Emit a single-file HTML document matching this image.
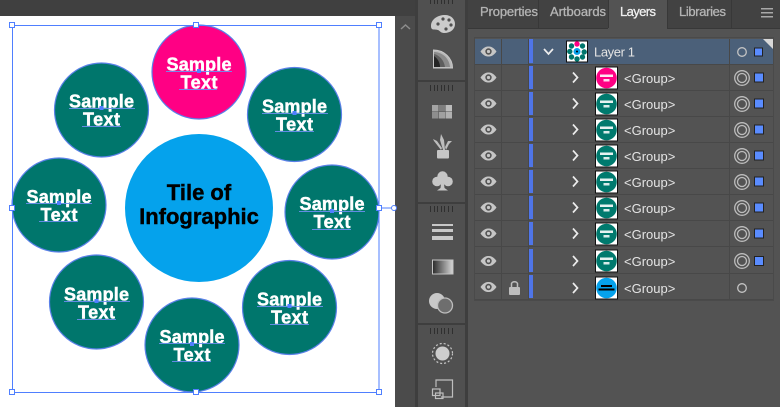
<!DOCTYPE html>
<html><head><meta charset="utf-8"><style>
html,body{margin:0;padding:0;background:#535353;width:780px;height:407px;overflow:hidden}
svg{display:block;position:absolute;left:0;top:0}
text{font-family:"Liberation Sans",sans-serif}
.s{font-size:18px;font-weight:bold;fill:#fff;stroke:#fff;stroke-width:.45px;text-anchor:middle}
.t{font-size:22px;font-weight:bold;fill:#000;stroke:#000;stroke-width:.4px;text-anchor:middle}
.g{font-size:13px;fill:#e4e4e4}
.tab{font-size:13px;fill:#b4b4b4;stroke:#b4b4b4;stroke-width:.3px}
</style></head><body>
<svg width="780" height="407" viewBox="0 0 780 407" xmlns="http://www.w3.org/2000/svg">
<defs>
<g id="eye"><path d="M-8 0C-5-4.500-2-5 0-5S5-4.500 8 0C5 4.500 2 5 0 5S-5 4.500-8 0Z" fill="#c6c6c6"/><circle r="3.200" fill="#535353"/><circle r="1.600" fill="#c6c6c6"/></g>
<path id="chev" d="M-2-5L2.500 0L-2 5" fill="none" stroke="#ececec" stroke-width="1.700"/>
<g id="tgl"><rect x="0" y="0" width="22" height="22" fill="#fff" stroke="#111" stroke-width="1"/></g>
<g id="teal"><use href="#tgl"/><circle cx="11" cy="11" r="10.300" fill="#007a6e"/><rect x="4.500" y="7.500" width="13" height="2.500" fill="#fff" opacity=".9"/><rect x="8" y="12" width="6" height="2.500" fill="#fff" opacity=".85"/></g>
<g id="pink"><use href="#tgl"/><circle cx="11" cy="11" r="10.300" fill="#ff0084"/><rect x="4.500" y="7.500" width="13" height="2.500" fill="#fff" opacity=".9"/><rect x="8" y="12" width="6" height="2.500" fill="#fff" opacity=".85"/></g>
<g id="tg"><circle r="7.300" fill="none" stroke="#bdbdbd" stroke-width="1.300"/><circle r="4.500" fill="none" stroke="#bdbdbd" stroke-width="1.300"/></g>
<g id="sq"><rect x="-5" y="-5" width="10" height="10" fill="#222"/><rect x="-4" y="-4" width="8" height="8" fill="#5a8cff"/></g>
<g id="grip" fill="#2f2f2f"><rect x="0" width="1" height="6"/><rect x="4" width="1" height="6"/><rect x="7" width="1" height="6"/><rect x="11" width="1" height="6"/><rect x="14" width="1" height="6"/><rect x="18" width="1" height="6"/><rect x="22" width="1" height="6"/></g>
<linearGradient id="gr" x1="0" x2="1" y1="0" y2="0"><stop offset="0" stop-color="#2a2a2a"/><stop offset="1" stop-color="#d8d8d8"/></linearGradient>
</defs>

<!-- backgrounds -->
<rect x="0" y="0" width="780" height="407" fill="#535353"/>
<rect x="0" y="0" width="415" height="16" fill="#404040"/>
<rect x="0" y="16" width="395" height="391" fill="#fff"/>
<rect x="395" y="16" width="20" height="391" fill="#4b4b4b"/>
<rect x="415" y="0" width="3" height="407" fill="#3e3e3e"/>
<rect x="418" y="0" width="47" height="407" fill="#505050"/>
<rect x="465" y="0" width="3" height="407" fill="#3e3e3e"/>
<path d="M401 29L405.500 25L410 29" fill="none" stroke="#8c8c8c" stroke-width="1.500"/>

<!-- circles -->
<g stroke="#5a80e8" stroke-width="1.200">
<circle cx="199" cy="72" r="47" fill="#ff0084"/>
<g fill="#00766c">
<circle cx="101.500" cy="110" r="47"/>
<circle cx="294.500" cy="114.500" r="47"/>
<circle cx="332" cy="212" r="47"/>
<circle cx="289.500" cy="307.500" r="47"/>
<circle cx="192" cy="345" r="47"/>
<circle cx="96.500" cy="302" r="47"/>
<circle cx="59" cy="205" r="47"/>
</g></g>
<circle cx="199" cy="208" r="74" fill="#05a2ec"/>

<!-- text -->
<text class="s" x="199" y="70.500" textLength="65">Sample</text><text class="s" x="199" y="88.500" textLength="37">Text</text>
<text class="s" x="101.500" y="107.500" textLength="65">Sample</text><text class="s" x="101.500" y="125.500" textLength="37">Text</text>
<text class="s" x="294.500" y="112.500" textLength="65">Sample</text><text class="s" x="294.500" y="130.500" textLength="37">Text</text>
<text class="s" x="332" y="210" textLength="65">Sample</text><text class="s" x="332" y="228" textLength="37">Text</text>
<text class="s" x="289.500" y="305.500" textLength="65">Sample</text><text class="s" x="289.500" y="323.500" textLength="37">Text</text>
<text class="s" x="192" y="343" textLength="65">Sample</text><text class="s" x="192" y="361" textLength="37">Text</text>
<text class="s" x="96.500" y="300.500" textLength="65">Sample</text><text class="s" x="96.500" y="318.500" textLength="37">Text</text>
<text class="s" x="59" y="203" textLength="65">Sample</text><text class="s" x="59" y="221" textLength="37">Text</text>
<text class="t" x="199" y="200">Tile of</text>
<text class="t" x="199" y="224">Infographic</text>

<!-- text underlines -->
<g stroke="#6d8ff0" stroke-width="1" opacity=".9">
<path d="M166 71.500H232M179 89.500H217"/>
<path d="M69 108.500H135M82 126.500H121"/>
<path d="M262 113.500H328M275 131.500H314"/>
<path d="M299 211.500H365M312 229.500H351"/>
<path d="M257 306.500H323M270 324.500H309"/>
<path d="M159 343.500H225M172 361.500H211"/>
<path d="M64 301.500H130M77 319.500H116"/>
<path d="M26 203.500H92M39 221.500H78"/>
</g>
<g fill="#4f7fff">
<rect x="197" y="69" width="4" height="4"/><rect x="99.500" y="106" width="4" height="4"/><rect x="292.500" y="111" width="4" height="4"/><rect x="330" y="209" width="4" height="4"/><rect x="287.500" y="304" width="4" height="4"/><rect x="190" y="342" width="4" height="4"/><rect x="94.500" y="299" width="4" height="4"/><rect x="57" y="201" width="4" height="4"/>
</g>

<!-- selection -->
<rect x="12.500" y="25.500" width="366.500" height="367" fill="none" stroke="#4f7fff" stroke-width="1"/>
<path d="M379 208H391" stroke="#4f7fff" stroke-width="1"/>
<circle cx="394" cy="208" r="2.500" fill="#fff" stroke="#4f7fff"/>
<g fill="#fff" stroke="#4f7fff" stroke-width="1">
<rect x="9.500" y="22.500" width="5" height="5"/><rect x="193.500" y="22.500" width="5" height="5"/><rect x="376.500" y="22.500" width="5" height="5"/>
<rect x="9.500" y="205.500" width="5" height="5"/><rect x="376.500" y="205.500" width="5" height="5"/>
<rect x="9.500" y="389.500" width="5" height="5"/><rect x="193.500" y="389.500" width="5" height="5"/><rect x="376.500" y="389.500" width="5" height="5"/>
</g>

<!-- tool panel dividers -->
<g fill="#3e3e3e"><rect x="418" y="80" width="47" height="2"/><rect x="418" y="202" width="47" height="2"/><rect x="418" y="323" width="47" height="2"/></g>
<use href="#grip" x="430" y="-2"/><use href="#grip" x="430" y="85"/><use href="#grip" x="430" y="206"/><use href="#grip" x="430" y="328"/>

<!-- palette -->
<path d="M431 26C431 19 438 15 445 15C451 15 455 19 455 24C455 29 451 33 444 33C441 33 440 31 438 30C435 29 431 31 431 26Z" fill="#cbcbcb"/>
<g fill="#505050"><circle cx="438" cy="24" r="1.600"/><circle cx="443" cy="19" r="1.600"/><circle cx="449" cy="20" r="1.600"/><circle cx="451" cy="25" r="1.600"/><circle cx="446" cy="29" r="1.600"/></g>
<!-- fan gradient -->
<path d="M433.500 50C444 50 452.500 58 452.500 68H433.500Z" fill="#b8b8b8" stroke="#c8c8c8"/>
<path d="M434 52C441 52 449 57 450 67H434Z" fill="#8a8a8a"/>
<path d="M434 54C439 55 444 60 445 67H434Z" fill="#5e5e5e"/>
<path d="M434 56C437 58 440 62 440 67H434Z" fill="#252525"/>
<!-- swatches -->
<g>
<rect x="432" y="105" width="6.500" height="6.500" fill="#a4a4a4"/><rect x="439" y="105" width="6" height="6.500" fill="#7e7e7e"/><rect x="445.500" y="105" width="6.500" height="6.500" fill="#bcbcbc"/>
<rect x="432" y="112" width="6.500" height="6.500" fill="#8e8e8e"/><rect x="439" y="112" width="6" height="6.500" fill="#a0a0a0"/><rect x="445.500" y="112" width="6.500" height="6.500" fill="#b0b0b0"/>
</g>
<!-- brushes -->
<rect x="437" y="150" width="12" height="8.500" rx="1" fill="#c6c6c6"/>
<path d="M441 150L434 141L433 139L437 141L442 148ZM443 150L440 140L441 134L444 140L445 150ZM446 150L449 144L452 141L448 141L445 147Z" fill="#bdbdbd"/>
<!-- club -->
<g fill="#c6c6c6"><circle cx="442.500" cy="176.500" r="5.200"/><circle cx="437" cy="181.500" r="4.800"/><circle cx="448" cy="181.500" r="4.800"/><path d="M441.500 180H443.500L444.500 188L448 190.500H437L440.500 188Z"/></g>
<!-- stroke -->
<g fill="#c8c8c8"><rect x="432" y="224" width="21" height="2"/><rect x="432" y="229" width="21" height="3"/><rect x="432" y="236" width="21" height="4"/></g>
<!-- gradient -->
<rect x="432.500" y="260" width="20.500" height="14" fill="url(#gr)" stroke="#c4c4c4"/>
<!-- transparency -->
<circle cx="437" cy="301" r="8" fill="#c8c8c8"/>
<circle cx="445" cy="305.500" r="7.500" fill="#6e6e6e" stroke="#bebebe" stroke-width="1.300"/>
<!-- appearance -->
<circle cx="442.500" cy="353.500" r="7" fill="#cdcdcd"/>
<circle cx="442.500" cy="353.500" r="10" fill="none" stroke="#c4c4c4" stroke-width="1.200" stroke-dasharray="2 2"/>
<!-- transform -->
<g fill="none" stroke="#bebebe" stroke-width="1.200"><path d="M436 387V380H452.500V397H441"/><rect x="432.500" y="389" width="7.500" height="6.500"/><rect x="435.500" y="393" width="7.500" height="5.500"/></g>

<!-- tabs -->
<rect x="468" y="0" width="312" height="28" fill="#424242"/>
<rect x="608" y="0" width="59" height="29" fill="#535353"/>
<g fill="#383838"><rect x="538" y="0" width="1" height="28"/><rect x="608" y="0" width="1" height="28"/><rect x="667" y="0" width="1" height="28"/><rect x="731" y="0" width="1" height="28"/><rect x="468" y="28" width="140" height="1"/><rect x="667" y="28" width="113" height="1"/></g>
<text class="tab" x="480" y="16" textLength="58">Properties</text>
<text class="tab" x="550" y="16" textLength="56">Artboards</text>
<text class="tab" x="620" y="16" textLength="36" style="fill:#f0f0f0;stroke:#f0f0f0">Layers</text>
<text class="tab" x="679" y="16" textLength="47">Libraries</text>
<g fill="#a8a8a8"><rect x="761" y="8" width="12" height="1.500"/><rect x="761" y="12" width="12" height="1.500"/><rect x="761" y="16" width="12" height="1.500"/></g>

<!-- layers list -->
<rect x="474.500" y="37.500" width="299" height="263" fill="#535353" stroke="#4a4a4a"/>
<rect x="475" y="39" width="298" height="25" fill="#4b6079"/>
<g fill="#484848">
<rect x="475" y="64" width="298" height="1"/><rect x="475" y="90" width="298" height="1"/><rect x="475" y="116" width="298" height="1"/><rect x="475" y="142" width="298" height="1"/><rect x="475" y="168" width="298" height="1"/><rect x="475" y="194" width="298" height="1"/><rect x="475" y="220" width="298" height="1"/><rect x="475" y="246" width="298" height="1"/><rect x="475" y="273" width="298" height="1"/><rect x="475" y="299" width="298" height="1"/>
<rect x="501" y="39" width="1" height="261"/><rect x="528" y="39" width="1" height="261"/><rect x="729" y="39" width="1" height="261"/>
</g>
<g fill="#4f75e8">
<rect x="529" y="39" width="4" height="24"/><rect x="529" y="66" width="4" height="23"/><rect x="529" y="92" width="4" height="23"/><rect x="529" y="118" width="4" height="23"/><rect x="529" y="144" width="4" height="23"/><rect x="529" y="170" width="4" height="23"/><rect x="529" y="196" width="4" height="23"/><rect x="529" y="222" width="4" height="23"/><rect x="529" y="249" width="4" height="23"/><rect x="529" y="275" width="4" height="23"/>
</g>
<path d="M763 39H773V49Z" fill="#d8d8d8"/>

<!-- eyes -->
<use href="#eye" x="488.500" y="51.500"/><use href="#eye" x="488.500" y="77.500"/><use href="#eye" x="488.500" y="103.500"/><use href="#eye" x="488.500" y="129.500"/><use href="#eye" x="488.500" y="155.500"/><use href="#eye" x="488.500" y="181.500"/><use href="#eye" x="488.500" y="207.500"/><use href="#eye" x="488.500" y="233.500"/><use href="#eye" x="488.500" y="261"/><use href="#eye" x="488.500" y="287"/>
<!-- lock -->
<rect x="509" y="287" width="11" height="8" rx="1" fill="#bdbdbd"/><path d="M511.500 287V284C511.500 281 517.500 281 517.500 284V287" fill="none" stroke="#bdbdbd" stroke-width="1.500"/>
<!-- chevrons -->
<path d="M544 49L548.500 54L553 49" fill="none" stroke="#ececec" stroke-width="1.700"/>
<use href="#chev" x="575" y="77.500"/><use href="#chev" x="575" y="103.500"/><use href="#chev" x="575" y="129.500"/><use href="#chev" x="575" y="155.500"/><use href="#chev" x="575" y="181.500"/><use href="#chev" x="575" y="207.500"/><use href="#chev" x="575" y="233.500"/><use href="#chev" x="575" y="261"/><use href="#chev" x="575" y="288"/>

<!-- layer thumb -->
<rect x="566.500" y="41" width="21" height="21" fill="#fff" stroke="#111"/>
<circle cx="577" cy="51.500" r="3.500" fill="#05a2ec"/><circle cx="577" cy="51.500" r="1" fill="#000"/>
<circle cx="577" cy="44" r="2.700" fill="#ff0084"/>
<g fill="#00766c"><circle cx="571.500" cy="46" r="2.700"/><circle cx="582.500" cy="46" r="2.700"/><circle cx="569.800" cy="51.500" r="2.700"/><circle cx="584.200" cy="52" r="2.700"/><circle cx="571.500" cy="57" r="2.700"/><circle cx="582.500" cy="57" r="2.700"/><circle cx="577" cy="59" r="2.700"/></g>

<!-- group thumbs -->
<use href="#pink" x="595.500" y="67"/>
<use href="#teal" x="595.500" y="93"/>
<use href="#teal" x="595.500" y="119"/>
<use href="#teal" x="595.500" y="145"/>
<use href="#teal" x="595.500" y="171"/>
<use href="#teal" x="595.500" y="197"/>
<use href="#teal" x="595.500" y="223"/>
<use href="#teal" x="595.500" y="250"/>
<use href="#tgl" x="595.500" y="277"/><circle cx="606.500" cy="288" r="10.300" fill="#05a2ec"/><rect x="601" y="285" width="11" height="2" fill="#000"/><rect x="598.500" y="288.500" width="16" height="2" fill="#000"/>

<!-- labels -->
<text x="594" y="56.500" style="font-size:13px;fill:#e4e4e4" textLength="41">Layer 1</text>
<text class="g" x="624" y="83">&lt;Group&gt;</text>
<text class="g" x="624" y="109">&lt;Group&gt;</text>
<text class="g" x="624" y="135">&lt;Group&gt;</text>
<text class="g" x="624" y="161">&lt;Group&gt;</text>
<text class="g" x="624" y="187">&lt;Group&gt;</text>
<text class="g" x="624" y="213">&lt;Group&gt;</text>
<text class="g" x="624" y="239">&lt;Group&gt;</text>
<text class="g" x="624" y="266">&lt;Group&gt;</text>
<text class="g" x="624" y="293">&lt;Group&gt;</text>

<!-- targets -->
<circle cx="742" cy="52" r="4.300" fill="none" stroke="#c4c4c4" stroke-width="1.300"/>
<rect x="754" y="47.500" width="9" height="9" fill="#222"/><rect x="755" y="48.500" width="7" height="7" fill="#5a8cff"/>
<use href="#tg" x="742" y="78"/><use href="#sq" x="759" y="77.500"/>
<use href="#tg" x="742" y="104"/><use href="#sq" x="759" y="103.500"/>
<use href="#tg" x="742" y="130"/><use href="#sq" x="759" y="129.500"/>
<use href="#tg" x="742" y="156"/><use href="#sq" x="759" y="155.500"/>
<use href="#tg" x="742" y="182"/><use href="#sq" x="759" y="181.500"/>
<use href="#tg" x="742" y="208"/><use href="#sq" x="759" y="207.500"/>
<use href="#tg" x="742" y="234"/><use href="#sq" x="759" y="233.500"/>
<use href="#tg" x="742" y="261"/><use href="#sq" x="759" y="261"/>
<circle cx="742" cy="288" r="4.300" fill="none" stroke="#c4c4c4" stroke-width="1.300"/>
</svg>
</body></html>
